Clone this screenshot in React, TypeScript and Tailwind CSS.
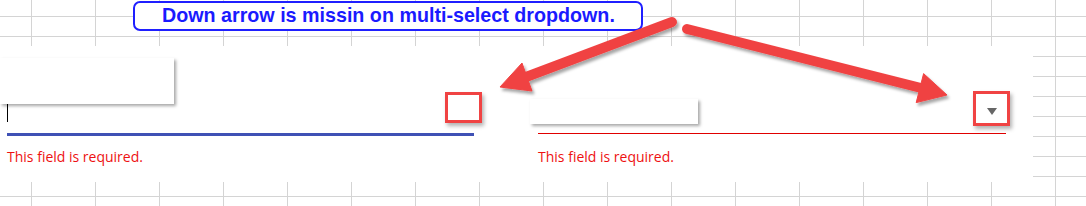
export default function App() {
  return (
    <div className="relative h-[206px] w-[1086px] overflow-hidden bg-white bg-[image:linear-gradient(to_right,#d4d4d4_1px,transparent_1px),linear-gradient(to_bottom,#d4d4d4_1px,transparent_1px)] bg-[length:64px_20px] bg-[position:31px_16px]">
      {/* callout */}
      <div className="h-[46px] pt-px pl-[133px]">
        <div className="flex h-[30px] w-[510px] items-center rounded-[7px] border-2 border-[#1f1fff] bg-white pl-[27px] font-['Liberation_Sans',Arial,sans-serif] text-[19.7px] font-bold leading-none text-[#1a1aff]">
          Down arrow is missin on multi-select dropdown.
        </div>
      </div>

      {/* form */}
      <div className="flex h-[136px] w-[1033px] bg-white pl-[7px] font-['Open_Sans',sans-serif]">
        <div className="flex w-[467px] flex-col">
          <div className="flex h-[87px] shrink-0 items-end pb-[11px]">
            <span className="h-[18px] w-px bg-black" />
          </div>
          <div className="h-0 shrink-0 border-t-[3px] border-[#3f51b5]" />
          <p className="mt-[11px] text-[14px] leading-[19px] text-[#ee1111]">This field is required.</p>
        </div>
        <div className="ml-[64px] flex w-[468px] flex-col">
          <div className="flex h-[87px] shrink-0 items-end justify-end pr-[9px] pb-[18px]">
            <span className="h-0 w-0 border-x-[5px] border-t-[7px] border-x-transparent border-t-[#666666]" />
          </div>
          <div className="h-0 shrink-0 border-t border-[#e00000]" />
          <p className="mt-[13px] text-[14px] leading-[19px] text-[#ee1111]">This field is required.</p>
        </div>
      </div>

      {/* open dropdown panels */}
      <div className="absolute top-[58px] left-0 h-[46px] w-[174px] bg-white shadow-[2px_2px_3px_rgba(0,0,0,0.35)]" />
      <div className="absolute top-[99px] left-[530px] h-[25px] w-[168px] bg-white shadow-[2px_2px_3px_rgba(0,0,0,0.35)]" />

      {/* annotation boxes */}
      <div className="absolute top-[92px] left-[445px] h-[31px] w-[37px] border-[3px] border-[#f04343] shadow-[2px_3px_4px_rgba(0,0,0,0.3)]" />
      <div className="absolute top-[91px] left-[973px] h-[35px] w-[37px] border-[3px] border-[#f04343] shadow-[2px_3px_4px_rgba(0,0,0,0.3)]" />

      {/* arrows */}
      <svg className="pointer-events-none absolute inset-0" width="1086" height="206" viewBox="0 0 1086 206">
        <defs>
          <filter id="sh" x="-10%" y="-20%" width="130%" height="150%">
            <feDropShadow dx="2" dy="3" stdDeviation="1.8" floodColor="#000" floodOpacity="0.35" />
          </filter>
        </defs>
        <g filter="url(#sh)" fill="#f04343" stroke="#f04343">
          <line x1="672" y1="22" x2="526" y2="77" strokeWidth="10" strokeLinecap="round" />
          <polygon points="500,87 522,63 532,91" strokeWidth="1" strokeLinejoin="round" />
        </g>
        <g filter="url(#sh)" fill="#f04343" stroke="#f04343">
          <line x1="687" y1="29" x2="921" y2="88" strokeWidth="10" strokeLinecap="round" />
          <polygon points="947,95 923.6,73.6 916.2,102.6" strokeWidth="1" strokeLinejoin="round" />
        </g>
      </svg>
    </div>
  );
}
